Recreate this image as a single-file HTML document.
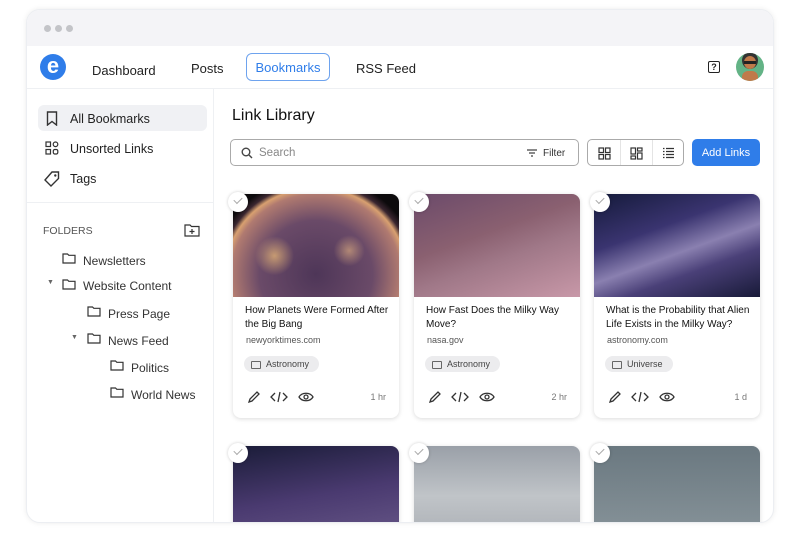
<!DOCTYPE html>
<html><head><style>
*{box-sizing:border-box;margin:0;padding:0}
body{width:800px;height:533px;background:#fff;font-family:"Liberation Sans",sans-serif;color:#222;position:relative;overflow:hidden}
.frame{position:absolute;left:26px;top:9px;width:748px;height:514px;border-radius:14px;background:#fff;box-shadow:0 0 6px rgba(0,0,0,.08);overflow:hidden;border:1px solid #eceef2}
.top{height:36px;background:#f4f4f7;position:relative}
.dot{position:absolute;top:15px;width:7px;height:7px;border-radius:50%;background:#c3c4c8}
.nav{position:absolute;top:36px;left:0;right:0;height:43px;border-bottom:1px solid #eef0f3}
.nav span{position:absolute;font-size:13px;color:#222}
.side{position:absolute;top:79px;left:0;width:187px;bottom:0;border-right:1px solid #eef0f3}
.si{position:absolute;font-size:12.5px;color:#222}
.fi{position:absolute;font-size:12px;color:#333}
.card{position:absolute;width:166px;border-radius:8px;background:#fff;box-shadow:0 1px 5px rgba(0,0,0,.15);overflow:hidden}
.card .img{height:103px}
.ck{position:absolute;width:20px;height:20px;border-radius:50%;background:#fff;box-shadow:0 0 3px rgba(0,0,0,.2);z-index:2}
.ck:after{content:"";position:absolute;left:6px;top:5px;width:7px;height:4px;border-left:1.5px solid #aaa;border-bottom:1.5px solid #aaa;transform:rotate(-45deg)}
.t{position:absolute;left:12px;top:110px;font-size:10px;line-height:13.5px;color:#111;width:150px}
.d{position:absolute;left:13px;top:141px;font-size:9px;color:#555}
.tag{position:absolute;left:11px;top:162px;height:16px;border-radius:8px;background:#ececee;font-size:9px;color:#444;padding:3px 10px 0 22px}
.tag:before{content:"";position:absolute;left:7px;top:5px;width:8px;height:6px;border:1px solid #666;border-radius:1px}
.ic{position:absolute;top:196px}
.tm{position:absolute;right:13px;top:198px;font-size:9px;color:#777}
</style></head><body>
<div class="frame">
<div class="top"><div class="dot" style="left:17px"></div><div class="dot" style="left:28px"></div><div class="dot" style="left:39px"></div></div>
<div class="nav">
<div style="position:absolute;left:13px;top:8px;width:26px;height:26px;border-radius:50%;background:#2f7de9;color:#fff;font-weight:bold;font-size:22px;line-height:24px;text-align:center">e</div>
<span style="left:65px;top:17px">Dashboard</span>
<span style="left:164px;top:15px">Posts</span>
<div style="position:absolute;left:219px;top:7px;width:84px;height:28px;border:1px solid #6ea3ee;border-radius:6px;color:#2f7de9;font-size:13px;display:flex;align-items:center;justify-content:center">Bookmarks</div>
<span style="left:329px;top:15px">RSS Feed</span>
<div style="position:absolute;left:681px;top:15px;width:12px;height:12px;border:1.3px solid #222;border-radius:2px;font-size:9px;text-align:center;line-height:10px;font-weight:bold">?</div>
<div style="position:absolute;left:709px;top:7px;width:28px;height:28px;border-radius:50%;background:#63b386;overflow:hidden"><div style="position:absolute;left:8px;top:3px;width:12px;height:13px;border-radius:50%;background:#c07a4a;box-shadow:0 -2px 0 2px #333"></div><div style="position:absolute;left:6px;top:18px;width:16px;height:12px;border-radius:6px 6px 0 0;background:#c07a4a"></div><div style="position:absolute;left:8px;top:8px;width:12px;height:3px;background:#222"></div></div>
</div>
<div class="side">
<div style="position:absolute;left:11px;top:16px;width:169px;height:26px;background:#f0f1f4;border-radius:6px"></div>
<svg style="position:absolute;left:19px;top:22px" width="12" height="15" viewBox="0 0 12 15"><path d="M1.5 1h9v13l-4.5-3.5L1.5 14z" fill="none" stroke="#333" stroke-width="1.4"/></svg>
<span class="si" style="left:43px;top:23px">All Bookmarks</span>
<svg style="position:absolute;left:18px;top:52px" width="14" height="14" viewBox="0 0 14 14" fill="none" stroke="#333" stroke-width="1.2"><rect x="1" y="1" width="4.5" height="4.5"/><circle cx="10.5" cy="3.3" r="2.3"/><rect x="1" y="8.5" width="4.5" height="4.5"/><rect x="8.3" y="8.5" width="4.5" height="4.5" rx="1.5"/></svg>
<span class="si" style="left:43px;top:53px">Unsorted Links</span>
<svg style="position:absolute;left:16px;top:81px" width="18" height="18" viewBox="0 0 18 18"><path d="M9 2h6.5v6.5L8 16 2 10z" fill="none" stroke="#333" stroke-width="1.4"/><circle cx="12.3" cy="5.5" r="1.2" fill="#333"/></svg>
<span class="si" style="left:43px;top:83px">Tags</span>
<div style="position:absolute;left:0;right:0;top:113px;border-top:1px solid #eef0f3"></div>
<span style="position:absolute;left:16px;top:136px;font-size:10.5px;color:#555">FOLDERS</span>
<svg style="position:absolute;left:157px;top:135px" width="16" height="13" viewBox="0 0 16 13" fill="none" stroke="#333" stroke-width="1.2"><path d="M1 1h5l1.5 1.5H15V12H1z"/><path d="M8 5v5M5.5 7.5h5"/></svg>
<svg style="position:absolute;left:35px;top:164px" width="14" height="11"><path d="M1 1h4.5l1.3 1.3H13V10H1z" fill="none" stroke="#333" stroke-width="1.2"/></svg><span class="fi" style="left:56px;top:165px">Newsletters</span>
<span style="position:absolute;left:20px;top:190px;font-size:7px;color:#666">▼</span>
<svg style="position:absolute;left:35px;top:190px" width="14" height="11"><path d="M1 1h4.5l1.3 1.3H13V10H1z" fill="none" stroke="#333" stroke-width="1.2"/></svg><span class="fi" style="left:56px;top:190px">Website Content</span>
<svg style="position:absolute;left:60px;top:217px" width="14" height="11"><path d="M1 1h4.5l1.3 1.3H13V10H1z" fill="none" stroke="#333" stroke-width="1.2"/></svg><span class="fi" style="left:81px;top:218px">Press Page</span>
<span style="position:absolute;left:44px;top:245px;font-size:7px;color:#666">▼</span>
<svg style="position:absolute;left:60px;top:244px" width="14" height="11"><path d="M1 1h4.5l1.3 1.3H13V10H1z" fill="none" stroke="#333" stroke-width="1.2"/></svg><span class="fi" style="left:81px;top:245px">News Feed</span>
<svg style="position:absolute;left:83px;top:271px" width="14" height="11"><path d="M1 1h4.5l1.3 1.3H13V10H1z" fill="none" stroke="#333" stroke-width="1.2"/></svg><span class="fi" style="left:104px;top:272px">Politics</span>
<svg style="position:absolute;left:83px;top:298px" width="14" height="11"><path d="M1 1h4.5l1.3 1.3H13V10H1z" fill="none" stroke="#333" stroke-width="1.2"/></svg><span class="fi" style="left:104px;top:299px">World News</span>
</div>
<span style="position:absolute;left:205px;top:97px;font-size:16px;color:#111">Link Library</span>
<div style="position:absolute;left:203px;top:129px;width:349px;height:27px;border:1px solid #aaa;border-radius:5px">
<svg style="position:absolute;left:10px;top:7px" width="12" height="12" fill="none" stroke="#444" stroke-width="1.4"><circle cx="5" cy="5" r="3.8"/><path d="M8 8l3 3"/></svg>
<span style="position:absolute;left:28px;top:7px;font-size:11.5px;color:#888">Search</span>
<svg style="position:absolute;left:296px;top:9px" width="10" height="8" stroke="#444" stroke-width="1.2"><path d="M0 1h10M2 4h6M4 7h2"/></svg>
<span style="position:absolute;left:312px;top:8px;font-size:10px;color:#333">Filter</span>
</div>
<div style="position:absolute;left:560px;top:129px;width:97px;height:27px;border:1px solid #aaa;border-radius:5px">
<div style="position:absolute;left:32px;top:0;bottom:0;border-left:1px solid #e4e4e4"></div><div style="position:absolute;left:64px;top:0;bottom:0;border-left:1px solid #e4e4e4"></div>
<svg style="position:absolute;left:10px;top:7px" width="13" height="13" fill="none" stroke="#333" stroke-width="1.2"><rect x="1" y="1" width="4.5" height="4.5"/><rect x="7.5" y="1" width="4.5" height="4.5"/><rect x="1" y="7.5" width="4.5" height="4.5"/><rect x="7.5" y="7.5" width="4.5" height="4.5"/></svg>
<svg style="position:absolute;left:42px;top:7px" width="13" height="13" fill="none" stroke="#333" stroke-width="1.2"><rect x="1" y="1" width="4.5" height="6"/><rect x="7.5" y="1" width="4.5" height="3"/><rect x="1" y="9" width="4.5" height="3"/><rect x="7.5" y="6" width="4.5" height="6"/></svg>
<svg style="position:absolute;left:74px;top:7px" width="13" height="13" stroke="#333" stroke-width="1.2"><path d="M1 1.5h1.5M4 1.5h8M1 4.5h1.5M4 4.5h8M1 7.5h1.5M4 7.5h8M1 10.5h1.5M4 10.5h8"/></svg>
</div>
<div style="position:absolute;left:665px;top:129px;width:68px;height:27px;background:#2f7de9;border-radius:5px;color:#fff;font-size:11px;display:flex;align-items:center;justify-content:center">Add Links</div>

<div class="ck" style="left:201px;top:182px"></div><div class="ck" style="left:382px;top:182px"></div><div class="ck" style="left:563px;top:182px"></div>
<div class="ck" style="left:201px;top:433px"></div><div class="ck" style="left:382px;top:433px"></div><div class="ck" style="left:563px;top:433px"></div>

<div class="card" style="left:206px;top:184px;height:224px"><div class="img" style="background:radial-gradient(circle at 25% 60%,rgba(240,190,120,.7) 0,transparent 14%),radial-gradient(circle at 70% 55%,rgba(230,180,130,.6) 0,transparent 12%),radial-gradient(ellipse 62% 95% at 50% 78%,#4e3658 0,#6a4a68 55%,#b07a70 82%,#d8a070 88%,#3a2630 93%,#0c0a0c 100%)"></div>
<div class="t">How Planets Were Formed After the Big Bang</div><div class="d">newyorktimes.com</div><div class="tag">Astronomy</div>
<svg class="ic" style="left:14px" width="70" height="14" fill="none" stroke="#333" stroke-width="1.3"><path d="M2 12l1-3 7-7 2 2-7 7z"/><path d="M28 3l-4 4 4 4M36 3l4 4-4 4M33 2l-2 10"/><path d="M52 7c3-5 11-5 14 0-3 5-11 5-14 0z"/><circle cx="59" cy="7" r="2"/></svg>
<div class="tm">1 hr</div></div>
<div class="card" style="left:387px;top:184px;height:224px"><div class="img" style="background:linear-gradient(160deg,#6b4a6a 0,#8a6070 40%,#a07888 60%,#c898a8 100%)"></div>
<div class="t">How Fast Does the Milky Way Move?</div><div class="d">nasa.gov</div><div class="tag">Astronomy</div>
<svg class="ic" style="left:14px" width="70" height="14" fill="none" stroke="#333" stroke-width="1.3"><path d="M2 12l1-3 7-7 2 2-7 7z"/><path d="M28 3l-4 4 4 4M36 3l4 4-4 4M33 2l-2 10"/><path d="M52 7c3-5 11-5 14 0-3 5-11 5-14 0z"/><circle cx="59" cy="7" r="2"/></svg>
<div class="tm">2 hr</div></div>
<div class="card" style="left:567px;top:184px;height:224px"><div class="img" style="background:linear-gradient(160deg,#141a3a 0,#3a3470 35%,#8a80b0 55%,#4a4078 70%,#181a38 100%)"></div>
<div class="t">What is the Probability that Alien Life Exists in the Milky Way?</div><div class="d">astronomy.com</div><div class="tag">Universe</div>
<svg class="ic" style="left:14px" width="70" height="14" fill="none" stroke="#333" stroke-width="1.3"><path d="M2 12l1-3 7-7 2 2-7 7z"/><path d="M28 3l-4 4 4 4M36 3l4 4-4 4M33 2l-2 10"/><path d="M52 7c3-5 11-5 14 0-3 5-11 5-14 0z"/><circle cx="59" cy="7" r="2"/></svg>
<div class="tm">1 d</div></div>

<div class="card" style="left:206px;top:436px;height:100px"><div style="height:100px;background:linear-gradient(170deg,#1a1c38 0,#4a3a70 50%,#6a5a8a 100%)"></div></div>
<div class="card" style="left:387px;top:436px;height:100px"><div style="height:100px;background:linear-gradient(180deg,#9aa0a8 0,#c0c4c8 50%,#a8acb2 100%)"></div></div>
<div class="card" style="left:567px;top:436px;height:100px"><div style="height:100px;background:linear-gradient(180deg,#6a7880 0,#8a969c 100%)"></div></div>
</div>
</body></html>
